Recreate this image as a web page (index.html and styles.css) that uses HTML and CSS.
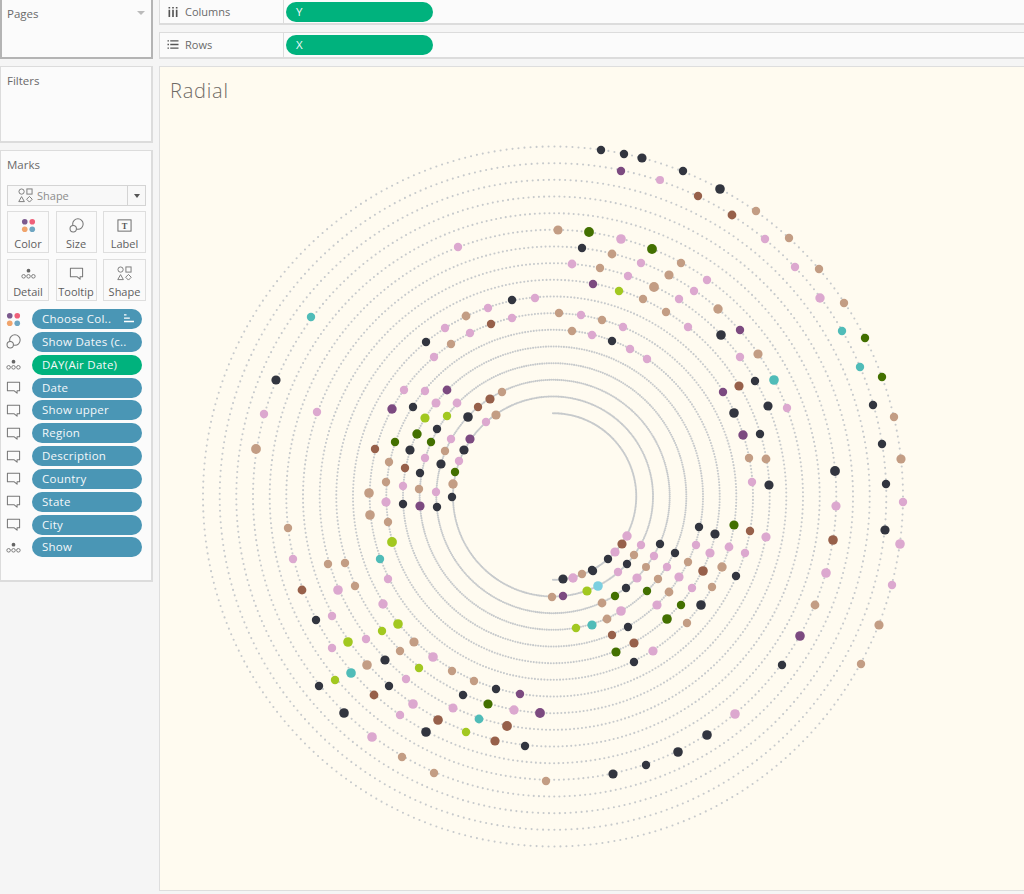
FILE: index.html
```html
<!DOCTYPE html>
<html lang="en">
<head>
<meta charset="utf-8">
<title>Radial</title>
<link rel="stylesheet" href="styles.css">
</head>
<body>
<svg class="defs" width="0" height="0" aria-hidden="true">
  <symbol id="i-color" viewBox="0 0 16 16"><circle cx="4" cy="4" r="3" fill="#7b5a8e"/><circle cx="12" cy="4" r="3" fill="#ef6079"/><circle cx="4" cy="12" r="3" fill="#f0a46c"/><circle cx="12" cy="12" r="3" fill="#6fa6c2"/></symbol>
  <symbol id="i-size" viewBox="0 0 16 16"><circle cx="9.5" cy="6.5" r="5.6" fill="none" stroke="#777" stroke-width="1.1"/><circle cx="4.5" cy="11.5" r="3.4" fill="#fafafa" stroke="#777" stroke-width="1.1"/></symbol>
  <symbol id="i-detail" viewBox="0 0 16 16"><circle cx="8" cy="5" r="2" fill="#666"/><circle cx="2.8" cy="11" r="1.9" fill="none" stroke="#777"/><circle cx="8" cy="11" r="1.9" fill="none" stroke="#777"/><circle cx="13.2" cy="11" r="1.9" fill="none" stroke="#777"/></symbol>
  <symbol id="i-tip" viewBox="0 0 16 16"><path d="M1.5 2.5h13v9h-2.7v2.6l-3-2.6H1.5z" fill="none" stroke="#777" stroke-width="1.1" stroke-linejoin="round"/></symbol>
  <symbol id="i-shape" viewBox="0 0 16 16"><circle cx="3.8" cy="3.8" r="2.8" fill="none" stroke="#777"/><rect x="9.5" y="1" width="5.5" height="5.5" fill="none" stroke="#777"/><path d="M3.8 9.2l3 5.3H.8z" fill="none" stroke="#777"/><path d="M12.2 9l3 3-3 3-3-3z" fill="none" stroke="#777"/></symbol>
</svg>
<div class="app">
  <aside class="side">
    <section class="card pages">
      <h2 class="card-title">Pages</h2><span class="caret"></span>
    </section>
    <section class="card filters">
      <h2 class="card-title">Filters</h2>
    </section>
    <section class="card marks">
      <h2 class="card-title">Marks</h2>
      <div class="select">
        <svg class="select-icon"><use href="#i-shape"/></svg>
        <span class="select-text">Shape</span>
        <span class="select-btn"><span class="caret-dark"></span></span>
      </div>
      <div class="buttons">
        <div class="btn"><svg class="btn-icon"><use href="#i-color"/></svg>Color</div>
        <div class="btn"><svg class="btn-icon"><use href="#i-size"/></svg>Size</div>
        <div class="btn"><svg class="btn-icon" viewBox="0 0 16 16"><rect x="1" y="2" width="14" height="12" fill="none" stroke="#666"/><text x="8" y="11.5" text-anchor="middle" class="icon-t">T</text></svg>Label</div>
        <div class="btn"><svg class="btn-icon"><use href="#i-detail"/></svg>Detail</div>
        <div class="btn"><svg class="btn-icon"><use href="#i-tip"/></svg>Tooltip</div>
        <div class="btn"><svg class="btn-icon"><use href="#i-shape"/></svg>Shape</div>
      </div>
      <ul class="fields">
        <li class="field"><svg class="field-icon"><use href="#i-color"/></svg><span class="pill blue">Choose Col..<svg class="sort" viewBox="0 0 14 12"><path d="M1 1h3M1 5h7M1 9h12" stroke="#fff" stroke-width="1.6" fill="none"/></svg></span></li>
        <li class="field"><svg class="field-icon"><use href="#i-size"/></svg><span class="pill blue">Show Dates (c..</span></li>
        <li class="field"><svg class="field-icon"><use href="#i-detail"/></svg><span class="pill green">DAY(Air Date)</span></li>
        <li class="field"><svg class="field-icon"><use href="#i-tip"/></svg><span class="pill blue">Date</span></li>
        <li class="field"><svg class="field-icon"><use href="#i-tip"/></svg><span class="pill blue">Show upper</span></li>
        <li class="field"><svg class="field-icon"><use href="#i-tip"/></svg><span class="pill blue">Region</span></li>
        <li class="field"><svg class="field-icon"><use href="#i-tip"/></svg><span class="pill blue">Description</span></li>
        <li class="field"><svg class="field-icon"><use href="#i-tip"/></svg><span class="pill blue">Country</span></li>
        <li class="field"><svg class="field-icon"><use href="#i-tip"/></svg><span class="pill blue">State</span></li>
        <li class="field"><svg class="field-icon"><use href="#i-tip"/></svg><span class="pill blue">City</span></li>
        <li class="field"><svg class="field-icon"><use href="#i-detail"/></svg><span class="pill blue">Show</span></li>
      </ul>
    </section>
  </aside>
  <main class="main">
    <div class="shelf shelf-cols">
      <div class="shelf-label"><svg class="shelf-icon" viewBox="0 0 12 12"><path d="M2 1v1.6M2 4v8M6 1v1.6M6 4v8M10 1v1.6M10 4v8" stroke="#555" stroke-width="1.8" fill="none"/></svg>Columns</div>
      <span class="pill green shelf-pill">Y</span>
    </div>
    <div class="shelf shelf-rows">
      <div class="shelf-label"><svg class="shelf-icon" viewBox="0 0 12 12"><path d="M0 2h1.6M3 2h9M0 6h1.6M3 6h9M0 10h1.6M3 10h9" stroke="#555" stroke-width="1.5" fill="none"/></svg>Rows</div>
      <span class="pill green shelf-pill">X</span>
    </div>
    <div class="canvas">
      <h1 class="title">Radial</h1>
      <svg class="chart" viewBox="160 67 864 823" preserveAspectRatio="xMinYMin slice">
        <g class="rings">
          <path d="M553 413.2A83.3 83.3 0 0 1 553 579.8" pathLength="182"/>
          <circle cx="553" cy="496.5" r="100" pathLength="365"/>
          <circle cx="553" cy="496.5" r="116.7" pathLength="365"/>
          <circle cx="553" cy="496.5" r="133.3" pathLength="365"/>
          <circle cx="553" cy="496.5" r="150" pathLength="365"/>
          <circle cx="553" cy="496.5" r="166.7" pathLength="365"/>
          <circle cx="553" cy="496.5" r="183.3" pathLength="365"/>
          <circle cx="553" cy="496.5" r="200" pathLength="365"/>
          <circle cx="553" cy="496.5" r="216.7" pathLength="365"/>
          <circle cx="553" cy="496.5" r="233.3" pathLength="365"/>
          <circle cx="553" cy="496.5" r="250" pathLength="365"/>
          <circle cx="553" cy="496.5" r="266.7" pathLength="365"/>
          <circle cx="553" cy="496.5" r="283.3" pathLength="365"/>
          <circle cx="553" cy="496.5" r="300" pathLength="365"/>
          <circle cx="553" cy="496.5" r="316.7" pathLength="365"/>
          <circle cx="553" cy="496.5" r="333.3" pathLength="365"/>
          <circle cx="553" cy="496.5" r="350" pathLength="365"/>
        </g>
        <g class="dark">
          <circle cx="601" cy="150" r="4.2"/><circle cx="624" cy="154" r="4.2"/><circle cx="642" cy="158" r="4.6"/><circle cx="683" cy="171" r="4.2"/><circle cx="720" cy="189" r="4.8"/><circle cx="582" cy="248" r="4.2"/><circle cx="721" cy="335" r="4.8"/><circle cx="612" cy="341" r="4.2"/><circle cx="873" cy="405" r="4.2"/><circle cx="755" cy="381" r="4.2"/><circle cx="768" cy="406" r="4.6"/><circle cx="734" cy="413" r="4.8"/><circle cx="760" cy="434" r="4.2"/><circle cx="882" cy="444" r="4.2"/><circle cx="835" cy="471" r="4.9"/><circle cx="769" cy="485" r="4.6"/><circle cx="886" cy="484" r="4.2"/><circle cx="885" cy="530" r="4.6"/><circle cx="699" cy="527" r="4.2"/><circle cx="715" cy="534" r="4.6"/><circle cx="736" cy="576" r="4.2"/><circle cx="675" cy="553" r="4.2"/><circle cx="660" cy="544" r="4.2"/><circle cx="701" cy="605" r="4.8"/><circle cx="626" cy="588" r="4.2"/><circle cx="628" cy="627" r="4.2"/><circle cx="634" cy="662" r="4.2"/><circle cx="608" cy="559" r="4.2"/><circle cx="627" cy="564" r="4.2"/><circle cx="593" cy="571" r="4.2"/><circle cx="563" cy="579" r="4.6"/><circle cx="592" cy="570" r="4.2"/><circle cx="782" cy="665" r="4.2"/><circle cx="707" cy="735" r="4.8"/><circle cx="678" cy="752" r="4.8"/><circle cx="646" cy="765" r="4.2"/><circle cx="613" cy="774" r="4.6"/><circle cx="413" cy="407" r="4.2"/><circle cx="468" cy="417" r="4.8"/><circle cx="437" cy="429" r="4.2"/><circle cx="410" cy="450" r="4.6"/><circle cx="464" cy="450" r="4.6"/><circle cx="441" cy="464" r="4.6"/><circle cx="420" cy="473" r="4.2"/><circle cx="452" cy="497" r="4.2"/><circle cx="403" cy="504" r="4.2"/><circle cx="437" cy="507" r="4.2"/><circle cx="316" cy="620" r="4.2"/><circle cx="385" cy="660" r="4.6"/><circle cx="319" cy="686" r="4.2"/><circle cx="389" cy="686" r="4.2"/><circle cx="496" cy="689" r="4.2"/><circle cx="463" cy="695" r="4.2"/><circle cx="344" cy="713" r="4.8"/><circle cx="426" cy="732" r="4.8"/><circle cx="525" cy="746" r="4.2"/><circle cx="512" cy="300" r="4.2"/><circle cx="426" cy="342" r="4.2"/><circle cx="276" cy="380" r="4.6"/>
        </g>
        <g class="pink">
          <circle cx="621" cy="239" r="4.8"/><circle cx="660" cy="180" r="4"/><circle cx="641" cy="263" r="4.2"/><circle cx="765" cy="239" r="4.2"/><circle cx="572" cy="264" r="4.4"/><circle cx="628" cy="276" r="4.2"/><circle cx="707" cy="280" r="4.2"/><circle cx="795" cy="267" r="4.2"/><circle cx="694" cy="291" r="4.2"/><circle cx="679" cy="299" r="4.2"/><circle cx="820" cy="298" r="4.7"/><circle cx="581" cy="315" r="4.2"/><circle cx="623" cy="327" r="4.2"/><circle cx="688" cy="327" r="4.2"/><circle cx="592" cy="335" r="4.2"/><circle cx="630" cy="349" r="4.2"/><circle cx="647" cy="359" r="4.2"/><circle cx="740" cy="357" r="4.2"/><circle cx="787" cy="408" r="4.2"/><circle cx="752" cy="482" r="4.2"/><circle cx="903" cy="502" r="4.2"/><circle cx="836" cy="506" r="4.6"/><circle cx="766" cy="537" r="4.6"/><circle cx="900" cy="544" r="4.8"/><circle cx="892" cy="585" r="4.2"/><circle cx="826" cy="573" r="4.8"/><circle cx="735" cy="714" r="4.8"/><circle cx="745" cy="553" r="4.2"/><circle cx="729" cy="547" r="4.4"/><circle cx="710" cy="553" r="4.6"/><circle cx="696" cy="545" r="4.2"/><circle cx="667" cy="567" r="4.2"/><circle cx="679" cy="577" r="4.6"/><circle cx="692" cy="588" r="4.2"/><circle cx="654" cy="556" r="4.2"/><circle cx="657" cy="605" r="4.6"/><circle cx="637" cy="578" r="4.6"/><circle cx="621" cy="611" r="4.8"/><circle cx="653" cy="651" r="4.6"/><circle cx="618" cy="572" r="4.2"/><circle cx="641" cy="545" r="4.2"/><circle cx="615" cy="552" r="4.6"/><circle cx="627" cy="536" r="4.7"/><circle cx="573" cy="578" r="4.7"/><circle cx="404" cy="390" r="4.2"/><circle cx="425" cy="391" r="4.2"/><circle cx="457" cy="403" r="4.4"/><circle cx="436" cy="403" r="4.5"/><circle cx="486" cy="422" r="4.2"/><circle cx="451" cy="439" r="4.2"/><circle cx="425" cy="458" r="4.2"/><circle cx="459" cy="461" r="4.2"/><circle cx="403" cy="486" r="4.2"/><circle cx="436" cy="492" r="4.2"/><circle cx="386" cy="502" r="4.6"/><circle cx="388" cy="579" r="4.2"/><circle cx="383" cy="604" r="4.7"/><circle cx="293" cy="559" r="4.2"/><circle cx="338" cy="590" r="4.8"/><circle cx="332" cy="616" r="4.2"/><circle cx="366" cy="639" r="4.2"/><circle cx="332" cy="648" r="4.2"/><circle cx="433" cy="657" r="4.8"/><circle cx="406" cy="679" r="4.2"/><circle cx="413" cy="704" r="4.8"/><circle cx="453" cy="708" r="4.5"/><circle cx="514" cy="710" r="4.7"/><circle cx="400" cy="715" r="4.2"/><circle cx="372" cy="737" r="4.8"/><circle cx="458" cy="247" r="4.2"/><circle cx="264" cy="414" r="4.2"/><circle cx="317" cy="412" r="4.2"/><circle cx="535" cy="298" r="4.2"/><circle cx="488" cy="308" r="4.2"/><circle cx="512" cy="318" r="4.2"/><circle cx="470" cy="333" r="4.2"/><circle cx="445" cy="328" r="4.2"/><circle cx="434" cy="357" r="4.2"/>
        </g>
        <g class="tan">
          <circle cx="756" cy="211" r="4.2"/><circle cx="558" cy="230" r="4.6"/><circle cx="612" cy="254" r="4.4"/><circle cx="681" cy="263" r="4.2"/><circle cx="789" cy="238" r="4.2"/><circle cx="600" cy="268" r="4.2"/><circle cx="669" cy="275" r="4.6"/><circle cx="819" cy="269" r="4.2"/><circle cx="654" cy="287" r="4.9"/><circle cx="643" cy="299" r="4.2"/><circle cx="844" cy="303" r="4.2"/><circle cx="718" cy="309" r="4.7"/><circle cx="666" cy="312" r="4.2"/><circle cx="559" cy="313" r="4.2"/><circle cx="602" cy="320" r="4.2"/><circle cx="758" cy="354" r="4.6"/><circle cx="572" cy="331" r="4.2"/><circle cx="894" cy="417" r="4.2"/><circle cx="901" cy="459" r="4.6"/><circle cx="749" cy="458" r="4.2"/><circle cx="766" cy="459" r="4.4"/><circle cx="879" cy="625" r="4.6"/><circle cx="815" cy="605" r="4.4"/><circle cx="861" cy="664" r="4.2"/><circle cx="722" cy="567" r="4.7"/><circle cx="688" cy="562" r="4.2"/><circle cx="646" cy="567" r="4"/><circle cx="658" cy="579" r="4.2"/><circle cx="669" cy="592" r="4.4"/><circle cx="712" cy="587" r="4.2"/><circle cx="687" cy="623" r="4.2"/><circle cx="607" cy="619" r="4.4"/><circle cx="602" cy="603" r="4.4"/><circle cx="634" cy="555" r="4.2"/><circle cx="582" cy="574" r="4.2"/><circle cx="552" cy="597" r="4.2"/><circle cx="502" cy="392" r="4.2"/><circle cx="496" cy="415" r="4.6"/><circle cx="445" cy="451" r="4.2"/><circle cx="389" cy="462" r="4.2"/><circle cx="453" cy="484" r="4.7"/><circle cx="386" cy="482" r="4.2"/><circle cx="419" cy="489" r="4.2"/><circle cx="369" cy="493" r="4.8"/><circle cx="370" cy="515" r="4.8"/><circle cx="388" cy="522" r="4.2"/><circle cx="345" cy="563" r="4.2"/><circle cx="328" cy="564" r="4.2"/><circle cx="355" cy="586" r="4.2"/><circle cx="256" cy="449" r="4.9"/><circle cx="288" cy="528" r="4.2"/><circle cx="414" cy="642" r="4.6"/><circle cx="400" cy="651" r="4.2"/><circle cx="367" cy="665" r="4.8"/><circle cx="452" cy="671" r="4.2"/><circle cx="474" cy="681" r="4.2"/><circle cx="402" cy="757" r="4.2"/><circle cx="434" cy="773" r="4.2"/><circle cx="546" cy="781" r="4.2"/><circle cx="466" cy="316" r="4.4"/><circle cx="451" cy="344" r="4.2"/>
        </g>
        <g class="brown">
          <circle cx="698" cy="196" r="4.2"/><circle cx="732" cy="215" r="4.4"/><circle cx="739" cy="386" r="4.6"/><circle cx="750" cy="531" r="4.2"/><circle cx="833" cy="540" r="4.8"/><circle cx="703" cy="571" r="4.8"/><circle cx="634" cy="643" r="4.6"/><circle cx="612" cy="635" r="4.2"/><circle cx="622" cy="544" r="4.6"/><circle cx="490" cy="399" r="4.6"/><circle cx="478" cy="407" r="4.2"/><circle cx="375" cy="449" r="4.2"/><circle cx="405" cy="468" r="4.2"/><circle cx="302" cy="590" r="4.4"/><circle cx="374" cy="695" r="4.4"/><circle cx="438" cy="720" r="4.8"/><circle cx="507" cy="726" r="4.9"/><circle cx="495" cy="741" r="4.6"/><circle cx="491" cy="324" r="4.2"/>
        </g>
        <g class="purple">
          <circle cx="621" cy="171" r="4.2"/><circle cx="593" cy="284" r="4.2"/><circle cx="740" cy="330" r="4.2"/><circle cx="723" cy="392" r="4.2"/><circle cx="743" cy="435" r="4.7"/><circle cx="800" cy="636" r="4.8"/><circle cx="563" cy="596" r="4.2"/><circle cx="447" cy="390" r="4.4"/><circle cx="392" cy="409" r="4.7"/><circle cx="470" cy="439" r="4.6"/><circle cx="420" cy="506" r="4.6"/><circle cx="520" cy="694" r="4.2"/><circle cx="540" cy="713" r="4.9"/>
        </g>
        <g class="olive">
          <circle cx="589" cy="232" r="4.9"/><circle cx="652" cy="249" r="4.9"/><circle cx="865" cy="338" r="4.2"/><circle cx="882" cy="377" r="4.2"/><circle cx="734" cy="525" r="4.6"/><circle cx="681" cy="605" r="4.2"/><circle cx="667" cy="619" r="4.8"/><circle cx="647" cy="591" r="4.2"/><circle cx="616" cy="652" r="4.6"/><circle cx="615" cy="596" r="4.2"/><circle cx="417" cy="434" r="4.7"/><circle cx="431" cy="442" r="4.2"/><circle cx="395" cy="442" r="4.2"/><circle cx="455" cy="472" r="4.2"/><circle cx="488" cy="704" r="4.6"/>
        </g>
        <g class="lime">
          <circle cx="619" cy="291" r="4.2"/><circle cx="587" cy="591" r="4.6"/><circle cx="576" cy="628" r="4.2"/><circle cx="447" cy="416" r="4.2"/><circle cx="425" cy="418" r="4.6"/><circle cx="392" cy="542" r="4.9"/><circle cx="398" cy="624" r="4.8"/><circle cx="382" cy="631" r="4.2"/><circle cx="348" cy="642" r="4.8"/><circle cx="419" cy="668" r="4.2"/><circle cx="335" cy="680" r="4.2"/><circle cx="466" cy="732" r="4.2"/>
        </g>
        <g class="teal">
          <circle cx="842" cy="331" r="4.2"/><circle cx="860" cy="367" r="4.2"/><circle cx="774" cy="380" r="4.8"/><circle cx="592" cy="625" r="4.6"/><circle cx="380" cy="559" r="4.2"/><circle cx="351" cy="673" r="4.8"/><circle cx="479" cy="719" r="4.4"/><circle cx="311" cy="317" r="4.2"/>
        </g>
        <g class="sky">
          <circle cx="598" cy="586" r="4.8"/>
        </g>
      </svg>
    </div>
  </main>
</div>
</body>
</html>
```
FILE: styles.css
```css
* { box-sizing: border-box; }
html, body { margin: 0; padding: 0; height: 100%; overflow: hidden; }
body {
  background: #f5f5f5;
  font-family: "Open Sans", "Liberation Sans", sans-serif;
  font-size: 11px;
  color: #666;
}
.defs { position: absolute; }
.icon-t { font-family: "Liberation Serif", serif; font-size: 9px; font-weight: 700; fill: #555; }
.app { display: flex; height: 894px; width: 1024px; gap: 6px; }

.side { width: 153px; display: flex; flex-direction: column; gap: 7px; }
.card {
  background: #fbfbfb;
  border: 1px solid #dcdcdc;
  border-width: 1px 2px 2px 1px;
  padding: 0 6px;
  position: relative;
}
.card-title { margin: 0; font-size: 11.5px; line-height: 15px; font-weight: 400; color: #6a6a6a; }
.pages {
  height: 59px;
  padding-top: 6px;
  padding-left: 5px;
  border-color: #b4b4b4;
  border-width: 0 2px 2px 2px;
}
.caret {
  position: absolute; top: 11px; right: 6px;
  border: 4px solid transparent; border-top: 4px solid #bbb; border-bottom: 0;
}
.filters { height: 77px; padding-top: 6px; }
.marks { height: 432px; padding-top: 6px; }

.select {
  margin-top: 13px;
  height: 21px;
  width: 139px;
  border: 1px solid #d4d4d4;
  background: #f8f8f8;
  display: flex;
  align-items: center;
  padding-left: 10px;
}
.select-icon { width: 15px; height: 15px; flex: none; }
.select-text { margin-left: 4px; color: #8c8c8c; flex: 1; }
.select-btn {
  width: 18px; height: 19px; border-left: 1px solid #d4d4d4;
  display: flex; align-items: center; justify-content: center;
}
.caret-dark { border: 3.5px solid transparent; border-top: 4px solid #555; border-bottom: 0; }

.buttons {
  margin-top: 5px;
  width: 139px;
  display: grid;
  grid-template-columns: 42px 41px 43px;
  grid-auto-rows: 42px;
  column-gap: 6.5px;
  row-gap: 6px;
}
.btn {
  border: 1px solid #dedede;
  background: #fafafa;
  display: flex; flex-direction: column; align-items: center;
  padding-top: 6px;
  font-size: 11px; line-height: 14px; color: #5e5e5e;
}
.btn-icon { width: 15px; height: 15px; margin-bottom: 4px; flex: none; }

.fields { list-style: none; margin: 8px 0 0 -1px; padding: 0; display: flex; flex-direction: column; gap: 2.85px; }
.field { display: flex; align-items: center; height: 20px; }
.field-icon { width: 15px; height: 15px; margin-right: 11px; flex: none; }
.pill {
  display: flex; align-items: center; justify-content: space-between;
  height: 20px;
  width: 110px;
  border-radius: 10px;
  padding: 0 7px 1px 10px;
  color: #f4f8fa;
  font-size: 11.5px;
  font-weight: 500;
  white-space: nowrap;
  letter-spacing: 0.25px;
}
.pill.blue { background: #4a96b5; }
.pill.green { background: #00b27d; }
.sort { width: 12px; height: 10px; flex: none; }

.main { flex: 1; min-width: 0; display: flex; flex-direction: column; }
.shelf {
  background: #fbfbfb;
  border: 1px solid #dcdcdc;
  border-right: 0;
  display: flex;
  align-items: center;
}
.shelf-cols { height: 25px; border-width: 0 0 2px 1px; }
.shelf-rows { height: 27px; margin-top: 7px; border-width: 1px 0 2px 1px; }
.shelf-label {
  width: 124px; height: 100%; flex: none;
  display: flex; align-items: center; padding: 0 0 1px 7px;
  border-right: 1px solid #dcdcdc;
  font-size: 11px; color: #6a6a6a;
}
.shelf-icon { width: 12px; height: 11px; margin-right: 6px; flex: none; }
.shelf-pill { width: 147px; margin-left: 2px; justify-content: flex-start; }
.canvas {
  margin-top: 7px;
  height: 825px;
  background: #fffbf0;
  border: 1px solid #dedede;
  border-right: 0;
  position: relative;
  overflow: hidden;
}
.title {
  position: absolute; left: 10px; top: 10px; margin: 0;
  font-size: 20px; line-height: 27px; font-weight: 300; color: #6f6a64;
  letter-spacing: 0.8px;
}
.chart { display: block; width: 864px; height: 823px; filter: blur(0.35px); }

.rings circle, .rings path {
  fill: none;
  stroke: #c7cacc;
  stroke-width: 2.1;
  stroke-linecap: round;
  stroke-dasharray: 0 1;
}
.dark { fill: #32353f; }
.pink { fill: #dca8cf; }
.tan { fill: #c39d84; }
.brown { fill: #97604a; }
.purple { fill: #7c4a80; }
.olive { fill: #437000; }
.lime { fill: #a2c820; }
.teal { fill: #50bcb8; }
.sky { fill: #7ccfe0; }
```
